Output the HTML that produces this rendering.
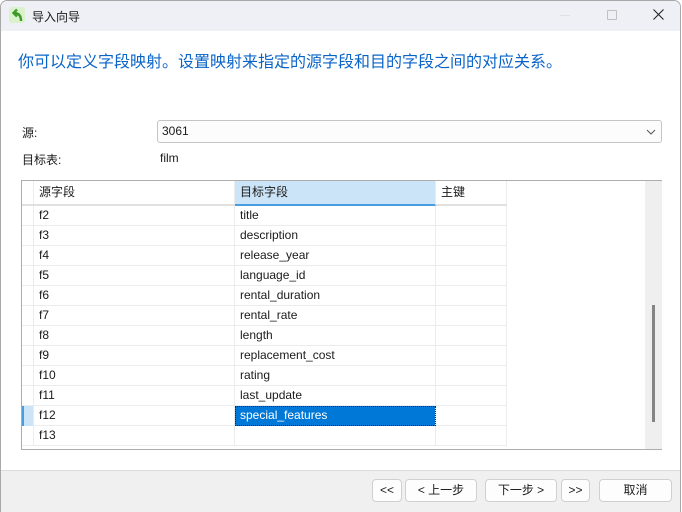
<!DOCTYPE html>
<html><head><meta charset="utf-8"><style>
*{margin:0;padding:0;box-sizing:border-box}
body{width:682px;height:512px;overflow:hidden;font-family:"Liberation Sans","Noto Sans CJK SC",sans-serif;font-size:12px;color:#1a1a1a;background:#fff;position:relative}
.win{position:absolute;left:0;top:0;width:681px;height:512px;border:1px solid #a8a8a8;border-bottom:none;border-radius:7px 7px 0 0;overflow:hidden;background:#fff}
.title{position:absolute;left:-1px;top:-1px;width:682px;height:31px;background:#eff0f6}
.abs{position:absolute}
.tbl{position:absolute;left:20px;top:179px;width:641px;height:270px;border:1px solid #adadad;background:#fff}
.row{position:absolute;left:0;height:20px;width:485px;border-bottom:1px solid #ececec}
.c{position:absolute;top:0;height:20px;line-height:19px;border-right:1px solid #ececec}
.btn{position:absolute;top:478px;height:23px;border:1px solid #d0d0d0;border-radius:4px;background:#fdfdfd;text-align:center;line-height:21px;font-size:12px}
</style></head><body><div class="win">
<div class="title">
<svg class="abs" style="left:9px;top:7px" width="16" height="16"><rect width="16" height="16" rx="3" fill="#d9f2cc"/><path d="M12 14 C12 8 9 6 5 6 M8 2.5 L4.5 6 L8 9.5" stroke="#3f9a2b" stroke-width="2.4" fill="none"/></svg>
<div class="abs" style="left:32px;top:8px;font-size:12px">导入向导</div>
<div class="abs" style="left:560px;top:15px;width:10px;height:1px;background:#e0e0e0"></div>
<div class="abs" style="left:607px;top:10px;width:10px;height:10px;border:1px solid #c0c0c0;border-radius:1px"></div>
<svg class="abs" style="left:653px;top:9px" width="11" height="11"><path d="M0.5 0.5 L10.5 10.5 M10.5 0.5 L0.5 10.5" stroke="#222" stroke-width="1.1"/></svg>
</div>
<div class="abs" style="left:17px;top:47px;font-size:16px;color:#0a64c8;white-space:nowrap">你可以定义字段映射。设置映射来指定的源字段和目的字段之间的对应关系。</div>
<div class="abs" style="left:21px;top:123px">源:</div>
<div class="abs" style="left:156px;top:119px;width:505px;height:23px;border:1px solid #c4c4c4;border-radius:3px;background:#fcfcfc;padding-left:4px;line-height:21px">3061
<svg class="abs" style="right:5px;top:8px" width="10" height="6"><path d="M1 1 L5 5 L9 1" stroke="#555" fill="none"/></svg></div>
<div class="abs" style="left:21px;top:150px">目标表:</div>
<div class="abs" style="left:159px;top:150px">film</div>
<div class="tbl">
<div class="abs" style="left:623px;top:0;width:17px;height:268px;background:#efefef"></div>
<div class="abs" style="left:630px;top:124px;width:3px;height:117px;background:#858585"></div>
<div class="row" style="top:0;height:25px;border-bottom:2px solid #e0e0e0">
<div class="c" style="left:0;width:12px;height:23px"></div>
<div class="c" style="left:12px;width:201px;height:23px;padding-left:5px;line-height:22px">源字段</div>
<div class="c" style="left:213px;width:201px;height:23px;padding-left:5px;line-height:22px;background:#cce4f7;border-bottom:2px solid #4a9de0;height:25px">目标字段</div>
<div class="c" style="left:414px;width:71px;height:23px;padding-left:5px;line-height:22px">主键</div>
</div>
<div id="rows"></div>
</div>
<div class="abs" style="left:-1px;top:469px;width:682px;height:43px;background:#f0f0f0;border-top:1px solid #dcdcdc"></div>
<div class="btn" style="left:371px;width:30px">&lt;&lt;</div>
<div class="btn" style="left:404px;width:72px">&lt; 上一步</div>
<div class="btn" style="left:484px;width:72px">下一步 &gt;</div>
<div class="btn" style="left:560px;width:29px">&gt;&gt;</div>
<div class="btn" style="left:598px;width:73px">取消</div>
</div>
<script>
var d=[["f2","title"],["f3","description"],["f4","release_year"],["f5","language_id"],["f6","rental_duration"],["f7","rental_rate"],["f8","length"],["f9","replacement_cost"],["f10","rating"],["f11","last_update"],["f12","special_features"],["f13",""]];
var h="";d.forEach(function(r,i){var sel=i==10;
h+='<div class="row" style="top:'+(25+i*20)+'px"><div class="c" style="left:0;width:12px;'+(sel?'background:#cce4f7;border-left:2px solid #4a9de0':'')+'"></div><div class="c" style="left:12px;width:201px;padding-left:5px">'+r[0]+'</div><div class="c" style="left:213px;width:201px;padding-left:5px;'+(sel?'background:#0078d7;color:#fff;outline:1px dotted #222;outline-offset:-1px':'')+'">'+r[1]+'</div><div class="c" style="left:414px;width:71px"></div></div>';});
document.getElementById("rows").innerHTML=h;
</script>
</body></html>
